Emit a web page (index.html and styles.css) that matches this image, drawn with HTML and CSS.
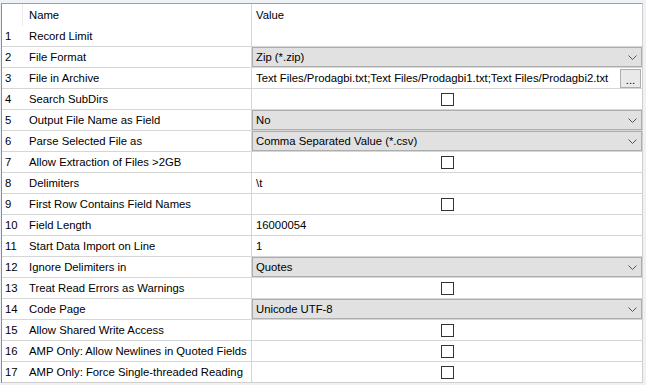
FILE: index.html
```html
<!DOCTYPE html>
<html>
<head>
  <meta charset="UTF-8" />
  <title>Properties</title>
  <link rel="stylesheet" href="styles.css">
</head>
<body>
  <div class="grid">
    <div class="row head">
      <div class="num"></div>
      <div class="name">Name</div>
      <div class="value">Value</div>
    </div>
    <div class="row">
      <div class="num">1</div><div class="name">Record Limit</div><div class="value"></div>
    </div>
    <div class="row">
      <div class="num">2</div><div class="name">File Format</div>
      <div class="value"><div class="combo">Zip (*.zip)<svg class="chev" width="9" height="5" viewBox="0 0 9 5"><path d="M0.5 0.5 L4.5 4.5 L8.5 0.5" fill="none" stroke="#555" stroke-width="1"/></svg></div></div>
    </div>
    <div class="row">
      <div class="num">3</div><div class="name">File in Archive</div>
      <div class="value text-btn"><span class="long">Text Files/Prodagbi.txt;Text Files/Prodagbi1.txt;Text Files/Prodagbi2.txt</span><span class="dots">...</span></div>
    </div>
    <div class="row">
      <div class="num">4</div><div class="name">Search SubDirs</div><div class="value center"><span class="check"></span></div>
    </div>
    <div class="row">
      <div class="num">5</div><div class="name">Output File Name as Field</div>
      <div class="value"><div class="combo">No<svg class="chev" width="9" height="5" viewBox="0 0 9 5"><path d="M0.5 0.5 L4.5 4.5 L8.5 0.5" fill="none" stroke="#555" stroke-width="1"/></svg></div></div>
    </div>
    <div class="row">
      <div class="num">6</div><div class="name">Parse Selected File as</div>
      <div class="value"><div class="combo">Comma Separated Value (*.csv)<svg class="chev" width="9" height="5" viewBox="0 0 9 5"><path d="M0.5 0.5 L4.5 4.5 L8.5 0.5" fill="none" stroke="#555" stroke-width="1"/></svg></div></div>
    </div>
    <div class="row">
      <div class="num">7</div><div class="name">Allow Extraction of Files &gt;2GB</div><div class="value center"><span class="check"></span></div>
    </div>
    <div class="row">
      <div class="num">8</div><div class="name">Delimiters</div><div class="value">\t</div>
    </div>
    <div class="row">
      <div class="num">9</div><div class="name">First Row Contains Field Names</div><div class="value center"><span class="check"></span></div>
    </div>
    <div class="row">
      <div class="num">10</div><div class="name">Field Length</div><div class="value">16000054</div>
    </div>
    <div class="row">
      <div class="num">11</div><div class="name">Start Data Import on Line</div><div class="value">1</div>
    </div>
    <div class="row">
      <div class="num">12</div><div class="name">Ignore Delimiters in</div>
      <div class="value"><div class="combo">Quotes<svg class="chev" width="9" height="5" viewBox="0 0 9 5"><path d="M0.5 0.5 L4.5 4.5 L8.5 0.5" fill="none" stroke="#555" stroke-width="1"/></svg></div></div>
    </div>
    <div class="row">
      <div class="num">13</div><div class="name">Treat Read Errors as Warnings</div><div class="value center"><span class="check"></span></div>
    </div>
    <div class="row">
      <div class="num">14</div><div class="name">Code Page</div>
      <div class="value"><div class="combo">Unicode UTF-8<svg class="chev" width="9" height="5" viewBox="0 0 9 5"><path d="M0.5 0.5 L4.5 4.5 L8.5 0.5" fill="none" stroke="#555" stroke-width="1"/></svg></div></div>
    </div>
    <div class="row">
      <div class="num">15</div><div class="name">Allow Shared Write Access</div><div class="value center"><span class="check"></span></div>
    </div>
    <div class="row">
      <div class="num">16</div><div class="name">AMP Only: Allow Newlines in Quoted Fields</div><div class="value center"><span class="check"></span></div>
    </div>
    <div class="row">
      <div class="num">17</div><div class="name">AMP Only: Force Single-threaded Reading</div><div class="value center"><span class="check"></span></div>
    </div>
  </div>
</body>
</html>
```

FILE: styles.css
```css
body {
  margin: 0;
  padding: 3px 0 0 1px;
  background: #eef1f5;
  font-family: "Liberation Sans", Arial, sans-serif;
  font-size: 11.3px;
  color: #000;
}
.grid {
  width: 640px;
  background: #fff;
  border-top: 1px solid #a0a0a0;
  border-left: 1px solid #8c8c8c;
  border-right: 1px solid #cfcfcf;
}
.row {
  display: flex;
  height: 21px;
  line-height: 20px;
  border-bottom: 1px solid #d6d6d6;
  box-sizing: border-box;
}
.row.head {
  height: 22px;
  line-height: 23px;
  border-bottom: none;
}
.row:last-child {
  border-bottom-color: #cfcfcf;
}
.num {
  width: 21px;
  padding-left: 3px;
  box-sizing: border-box;
  flex-shrink: 0;
}
.head .num {
  box-shadow: inset -1px 0 #ececec;
}
.name {
  width: 229px;
  padding-left: 6px;
  box-sizing: border-box;
  border-right: 1px solid #d6d6d6;
  flex-shrink: 0;
  white-space: nowrap;
}
.value {
  flex: 1;
  padding-left: 4px;
  white-space: nowrap;
  overflow: hidden;
  position: relative;
}
.value.center {
  display: flex;
  justify-content: center;
  align-items: center;
  padding-left: 0;
}
.check {
  width: 13px;
  height: 13px;
  box-sizing: border-box;
  border: 1px solid #333;
  background: #fff;
}
.value:has(.combo) {
  padding-left: 0;
}
.combo {
  display: flex;
  align-items: center;
  height: 20px;
  padding-left: 3px;
  box-sizing: border-box;
  background: #e1e1e1;
  border: 1px solid #adadad;
}
.chev {
  margin-left: auto;
  margin-right: 4px;
}
.text-btn {
  display: flex;
  align-items: center;
}
.long {
  flex: 1;
  overflow: hidden;
}
.dots {
  width: 21px;
  height: 19px;
  box-sizing: border-box;
  margin-right: 1px;
  border: 1px solid #adadad;
  background: #e9e9e9;
  text-align: center;
  line-height: 20px;
  flex-shrink: 0;
}
```
